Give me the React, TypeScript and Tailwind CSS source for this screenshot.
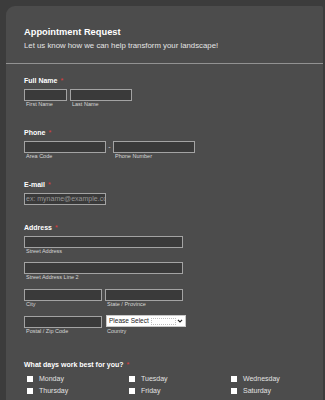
import React from 'react';

const font = { fontFamily: '"Liberation Sans", Arial, sans-serif' };

function Label({ text }: { text: string }) {
  return (
    <div className="flex items-center h-[9px] text-[7px] leading-[9px] font-bold text-white">
      {text}
      <span className="ml-[3px] text-[#e23b3b] font-normal">*</span>
    </div>
  );
}

function Field({ w, sub, ml = 2 }: { w: number; sub?: string; ml?: number }) {
  return (
    <div className="flex flex-col" style={{ width: w }}>
      <div className="h-[12px] w-full bg-[#3a3a3a] border border-[#a3a3a3]" />
      {sub && (
        <div className="h-[7px] text-[5.5px] leading-[7px] text-[#d6d6d6] whitespace-nowrap" style={{ marginLeft: ml }}>
          {sub}
        </div>
      )}
    </div>
  );
}

function Day({ name }: { name: string }) {
  return (
    <div className="w-[102px] h-[12px] flex items-center pl-[3px] gap-[6px]">
      <span className="w-[6px] h-[6px] bg-white shrink-0" />
      <span className="text-[7px] leading-[12px] text-[#e2e2e2]">{name}</span>
    </div>
  );
}

export default function App() {
  return (
    <div className="w-[325px] h-[400px] bg-[#3c3c3c] overflow-hidden pt-[6px] pl-[6px] pr-[2px]" style={font}>
      <div className="bg-[#4c4c4c] rounded-tl-[9px] rounded-tr-[2px] h-[420px] overflow-hidden">
        {/* header */}
        <div className="pl-[18px] pt-[21px]">
          <h1 className="text-[9.3px] leading-[11px] font-bold text-white">Appointment Request</h1>
          <p className="mt-[3px] text-[7.8px] leading-[10px] text-[#e4e4e4] whitespace-nowrap">
            Let us know how we can help transform your landscape!
          </p>
        </div>
        <div className="mt-[12px] border-t border-[#929292] h-[1px] bg-[#5a5a5a]" />

        <div className="pl-[18px] pt-[12px]">
          {/* Full Name */}
          <Label text="Full Name" />
          <div className="mt-[4px] flex gap-[3px]">
            <Field w={43} sub="First Name" />
            <Field w={62} sub="Last Name" />
          </div>

          {/* Phone */}
          <div className="mt-[20px]">
            <Label text="Phone" />
          </div>
          <div className="mt-[4px] flex">
            <Field w={82} sub="Area Code" />
            <div className="w-[7px] h-[12px] text-[7px] leading-[12px] text-[#d6d6d6] text-center">-</div>
            <Field w={82} sub="Phone Number" />
          </div>

          {/* E-mail */}
          <div className="mt-[20px]">
            <Label text="E-mail" />
          </div>
          <div className="mt-[4px] w-[82px] h-[12px] bg-[#3a3a3a] border border-[#a3a3a3] overflow-hidden flex items-center">
            <span className="pl-[1px] text-[7px] leading-[10px] text-[#969696] whitespace-nowrap">ex: myname@example.co</span>
          </div>

          {/* Address */}
          <div className="mt-[18px]">
            <Label text="Address" />
          </div>
          <div className="mt-[4px]">
            <Field w={159} sub="Street Address" />
          </div>
          <div className="mt-[7px]">
            <Field w={159} sub="Street Address Line 2" />
          </div>
          <div className="mt-[8px] flex gap-[3px]">
            <Field w={78} sub="City" />
            <Field w={78} sub="State / Province" />
          </div>
          <div className="mt-[8px] flex gap-[4px]">
            <Field w={78} sub="Postal / Zip Code" />
            <div className="flex flex-col -mt-[1px]">
              <div className="w-[80px] h-[12px] bg-white border border-[#c8c8c8] flex items-center pl-[2px] pr-[2px]">
                <span className="text-[6.5px] leading-[10px] text-[#222] whitespace-nowrap">Please Select</span>
                <span className="ml-[2px] flex-1 h-[7px] border border-dotted border-[#bdbdbd]" />
                <svg width="6" height="6" viewBox="0 0 10 10" className="ml-[1px]">
                  <path d="M1.5 3 L5 6.5 L8.5 3" fill="none" stroke="#222" strokeWidth="1.8" />
                </svg>
              </div>
              <div className="mt-[1px] ml-[1px] h-[7px] text-[5.5px] leading-[7px] text-[#d6d6d6]">Country</div>
            </div>
          </div>

          {/* Days */}
          <div className="mt-[25px]">
            <Label text="What days work best for you?" />
          </div>
          <div className="mt-[4px] flex flex-wrap w-[310px]">
            <Day name="Monday" />
            <Day name="Tuesday" />
            <Day name="Wednesday" />
            <Day name="Thursday" />
            <Day name="Friday" />
            <Day name="Saturday" />
          </div>
        </div>
      </div>
    </div>
  );
}
